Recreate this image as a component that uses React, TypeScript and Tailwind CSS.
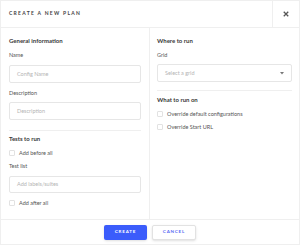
import React from 'react';

const Check: React.FC<{ label: string; className?: string }> = ({ label, className = '' }) => (
  <div className={`flex items-center gap-[4px] h-[8px] ${className}`}>
    <span className="w-[6px] h-[6px] border border-[#e2e2e2] rounded-[1px] bg-white" />
    <span className="text-[5.5px] leading-[8px] text-[#555]">{label}</span>
  </div>
);

const App: React.FC = () => {
  const heading = 'text-[6px] leading-[8px] font-bold text-[#3a3a3a]';
  const label = 'text-[5.5px] leading-[8px] text-[#555]';
  const input =
    'flex items-center px-[7px] border border-[#e6e6e6] rounded-[2px] text-[5.5px] text-[#b4b4b4]';

  return (
    <div
      className="w-[300px] h-[245px] bg-white border border-[#efefef] flex flex-col"
      style={{ fontFamily: 'Lato, "Open Sans", sans-serif' }}
    >
      {/* Header */}
      <div className="h-[27px] flex border-b border-[#efefef] shrink-0">
        <div className="flex-1 flex items-center pl-[8px] text-[5px] font-bold tracking-[1.3px] text-[#444]">
          CREATE A NEW PLAN
        </div>
        <div className="w-[27px] flex items-center justify-center border-l border-[#efefef]">
          <svg width="6" height="6" viewBox="0 0 8 8">
            <path d="M1 1 L7 7 M7 1 L1 7" stroke="#555" strokeWidth="1.7" />
          </svg>
        </div>
      </div>

      {/* Body */}
      <div className="flex flex-1">
        <div className="w-[149px] border-r border-[#efefef] px-[8px] flex flex-col">
          <div className={`${heading} mt-[9px]`}>General information</div>
          <div className={`${label} mt-[6px]`}>Name</div>
          <div className={`${input} h-[18px] mt-[6px]`}>Config Name</div>
          <div className={`${label} mt-[6px]`}>Description</div>
          <div className={`${input} h-[18px] mt-[5px]`}>Description</div>
          <div className="h-px bg-[#efefef] mt-[10px]" />
          <div className={`${heading} mt-[4px]`}>Tests to run</div>
          <Check label="Add before all" className="mt-[6px]" />
          <div className={`${label} mt-[5px]`}>Test list</div>
          <div className={`${input} h-[17px] mt-[6px]`}>Add labels/suites</div>
          <Check label="Add after all" className="mt-[6px]" />
        </div>

        <div className="flex-1 px-[7px] flex flex-col">
          <div className={`${heading} mt-[9px]`}>Where to run</div>
          <div className={`${label} mt-[6px]`}>Grid</div>
          <div className={`${input} h-[18px] mt-[5px] justify-between`}>
            <span>Select a grid</span>
            <svg width="4" height="3" viewBox="0 0 4 3">
              <path d="M0 0 L4 0 L2 2.5 Z" fill="#777" />
            </svg>
          </div>
          <div className="h-px bg-[#efefef] mt-[8px]" />
          <div className={`${heading} mt-[5px]`}>What to run on</div>
          <Check label="Override default configurations" className="mt-[6px]" />
          <Check label="Override Start URL" className="mt-[5px]" />
        </div>
      </div>

      {/* Footer */}
      <div className="h-[25px] border-t border-[#efefef] flex items-center justify-center gap-[5px] shrink-0">
        <button className="w-[43px] h-[15px] bg-[#3b5cfb] rounded-[2px] text-white text-[4.5px] font-bold tracking-[0.8px] shadow-sm">
          CREATE
        </button>
        <button className="w-[44px] h-[15px] bg-white border border-[#e2e2e2] rounded-[2px] text-[#5a6cf3] text-[4.5px] font-bold tracking-[0.8px] shadow-sm">
          CANCEL
        </button>
      </div>
    </div>
  );
};

export default App;
